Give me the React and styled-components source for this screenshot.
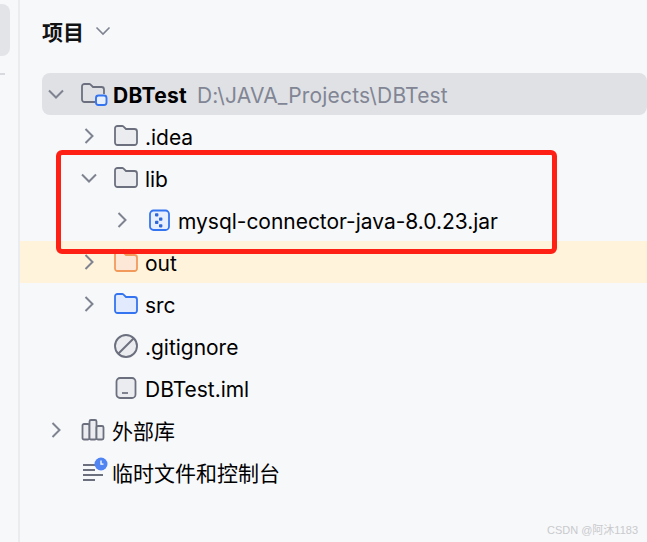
import React from "react";
import styled, { createGlobalStyle } from "styled-components";

const Global = createGlobalStyle`
  html, body { margin: 0; padding: 0; background: #f7f8fa; }
  #root { width: 647px; height: 542px; overflow: hidden; }
`;

const Page = styled.div`
  position: relative;
  display: flex;
  width: 647px;
  height: 542px;
  overflow: hidden;
  background: #f7f8fa;
  color: #000;
  font-family: Inter, "Noto Sans CJK SC", sans-serif;
`;

const Rail = styled.aside`
  flex: none;
  width: 20px;
  box-sizing: border-box;
  border-right: 2px solid #ebecf0;
  padding-top: 4px;
`;

const RailButton = styled.div`
  width: 10px;
  height: 52px;
  background: #e2e4e8;
  border-radius: 0 8px 8px 0;
`;

const RailDivider = styled.div`
  width: 5px;
  height: 1.5px;
  margin-top: 17px;
  background: #d8dae0;
`;

const Main = styled.main`
  flex: 1;
  min-width: 0;
`;

const Header = styled.header`
  display: flex;
  align-items: center;
  gap: 11px;
  height: 62px;
  padding-left: 22px;
  box-sizing: border-box;
  margin-bottom: 11px;
`;

const Title = styled.h1`
  margin: 0;
  font-size: 21px;
  font-weight: 700;
  color: #111214;
`;

const HeaderChevron = styled.span`
  flex: none;
  display: flex;
  width: 16px;
  color: #7f8390;
`;

const Tree = styled.div`
  display: flex;
  flex-direction: column;
`;

const Row = styled.div`
  display: flex;
  align-items: center;
  height: 42px;
  padding-left: ${(p) => 24 + p.$depth * 33}px;
  background: ${(p) => (p.$tint ? "#fff3dc" : "transparent")};
`;

const RootRow = styled.div`
  display: flex;
  align-items: center;
  height: 42px;
  margin-left: 22px;
  padding-left: 2px;
  background: #dfe1e5;
  border-radius: 8px 8px 8px 8px;
`;

const ChevronSlot = styled.span`
  flex: none;
  display: flex;
  align-items: center;
  justify-content: center;
  width: 24px;
  height: 24px;
  color: #7f8390;
`;

const IconSlot = styled.span`
  flex: none;
  display: flex;
  align-items: center;
  width: ${(p) => (p.$root ? 45 : 44)}px;
  padding-left: 13px;
  box-sizing: border-box;
`;

const Label = styled.span`
  font-size: 21px;
  padding-top: ${(p) => (p.$cjk ? 0 : 2)}px;
  white-space: nowrap;
  letter-spacing: ${(p) => (p.$cjk ? 0 : -0.03)}px;
`;

const RootName = styled.span`
  font-size: 21px;
  font-weight: 700;
  letter-spacing: 0.3px;
  padding-top: 2px;
  white-space: nowrap;
`;

const Path = styled.span`
  margin-left: 10px;
  font-size: 21px;
  letter-spacing: 0.17px;
  padding-top: 2px;
  color: #818594;
  white-space: nowrap;
`;

const RedBox = styled.div`
  position: absolute;
  left: 56px;
  top: 150px;
  width: 501px;
  height: 104px;
  box-sizing: border-box;
  border: 5px solid #ff2015;
  border-radius: 6px;
  pointer-events: none;
`;

const Watermark = styled.div`
  position: absolute;
  right: 9px;
  bottom: 5px;
  font-family: "Liberation Sans", "Noto Sans CJK SC", sans-serif;
  font-size: 11px;
  color: #c9cacd;
`;

const Right = () => (
  <svg width="24" height="24" viewBox="0 0 24 24" fill="none" stroke="currentColor" strokeWidth="2">
    <path d="M8.5 5 L15.5 12 L8.5 19" />
  </svg>
);
const Down = () => (
  <svg width="24" height="24" viewBox="0 0 24 24" fill="none" stroke="currentColor" strokeWidth="2">
    <path d="M5 8.5 L12 15.5 L19 8.5" />
  </svg>
);

const FOLDER = "M1 4.5 a2.5 2.5 0 0 1 2.5-2.5 h4.8 a1.5 1.5 0 0 1 1 .4 l2.7 2.6 h8.5 a2.5 2.5 0 0 1 2.5 2.5 v11 a2.5 2.5 0 0 1-2.5 2.5 h-17 a2.5 2.5 0 0 1-2.5-2.5 z";

const Folder = ({ stroke = "#6c707e", fill = "#ebecf0" }) => (
  <svg width="24" height="24" viewBox="0 0 24 24" style={{ display: "block" }}>
    <path d={FOLDER} fill={fill} stroke={stroke} strokeWidth="1.8" />
  </svg>
);

const ModuleFolder = () => (
  <svg width="28" height="26" viewBox="0 0 28 26" style={{ display: "block", overflow: "visible" }}>
    <path d="M14 21 H3.5 a2.5 2.5 0 0 1-2.5-2.5 V5.5 a2.5 2.5 0 0 1 2.5-2.5 h4.8 a1.5 1.5 0 0 1 1 .4 l2.7 2.6 h8.5 a2.5 2.5 0 0 1 2.5 2.5 v4.5" fill="none" stroke="#6c707e" strokeWidth="1.8" />
    <rect x="15" y="14.5" width="10.5" height="9.5" rx="2.5" fill="#e7effd" stroke="#3574f0" strokeWidth="1.9" />
  </svg>
);

const Jar = () => (
  <svg width="24" height="24" viewBox="0 0 24 24" style={{ display: "block" }}>
    <rect x="3" y="2.5" width="19" height="19.5" rx="3.5" fill="#e7effd" stroke="#3574f0" strokeWidth="1.8" />
    <g fill="#2d66d8">
      <rect x="8" y="5.2" width="3.4" height="3.2" rx="0.8" />
      <rect x="12" y="9.6" width="3.4" height="3.2" rx="0.8" />
      <rect x="8" y="12.8" width="3.4" height="3.2" rx="0.8" />
      <rect x="12" y="16.2" width="3.4" height="3.2" rx="0.8" />
    </g>
  </svg>
);

const Ignored = () => (
  <svg width="24" height="24" viewBox="0 0 24 24" style={{ display: "block" }}>
    <circle cx="12" cy="12" r="11" fill="#ebecf0" stroke="#6c707e" strokeWidth="1.9" />
    <path d="M4.5 19.5 L19.5 4.5" stroke="#6c707e" strokeWidth="1.9" />
  </svg>
);

const ImlFile = () => (
  <svg width="24" height="24" viewBox="0 0 24 24" style={{ display: "block" }}>
    <rect x="2.5" y="2" width="19" height="20" rx="3.5" fill="#ebecf0" stroke="#6c707e" strokeWidth="1.8" />
    <path d="M8 17 H14" stroke="#6c707e" strokeWidth="1.7" />
  </svg>
);

const Library = () => (
  <svg width="24" height="24" viewBox="0 0 24 24" style={{ display: "block" }}>
    <g fill="#ebecf0" stroke="#6c707e" strokeWidth="1.8">
      <rect x="1.5" y="6" width="7" height="15.5" rx="1.5" />
      <rect x="8.5" y="2" width="7" height="19.5" rx="1.5" />
      <rect x="15.5" y="8" width="7" height="13.5" rx="1.5" />
    </g>
  </svg>
);

const Scratches = () => (
  <svg width="25" height="24" viewBox="0 0 25 24" style={{ display: "block", overflow: "visible" }}>
    <path d="M2 5 H14 M2 10 H14 M2 15 H22 M2 20 H14" stroke="#6c707e" strokeWidth="1.8" />
    <circle cx="20" cy="4" r="6.5" fill="#4f84f2" />
    <path d="M20 0.5 V4.2 H22.5" fill="none" stroke="#fff" strokeWidth="1.3" />
  </svg>
);

const items = [
  { depth: 1, icon: <Folder />, label: ".idea" },
  { depth: 1, open: true, icon: <Folder />, label: "lib" },
  { depth: 2, icon: <Jar />, label: "mysql-connector-java-8.0.23.jar" },
  { depth: 1, tint: true, icon: <Folder stroke="#f29a5c" fill="#fde8d8" />, label: "out" },
  { depth: 1, icon: <Folder stroke="#3574f0" fill="#e1ebfd" />, label: "src" },
  { depth: 1, leaf: true, icon: <Ignored />, label: ".gitignore" },
  { depth: 1, leaf: true, icon: <ImlFile />, label: "DBTest.iml" },
  { depth: 0, cjk: true, icon: <Library />, label: "外部库" },
  { depth: 0, cjk: true, leaf: true, icon: <Scratches />, label: "临时文件和控制台" },
];

export default function App() {
  return (
    <Page>
      <Global />
      <Rail>
        <RailButton />
        <RailDivider />
      </Rail>
      <Main>
        <Header>
          <Title>项目</Title>
          <HeaderChevron>
            <svg width="16" height="16" viewBox="0 0 16 16" fill="none" stroke="currentColor" strokeWidth="1.6">
              <path d="M1.5 4.5 L8 11 L14.5 4.5" />
            </svg>
          </HeaderChevron>
        </Header>
        <Tree>
          <RootRow>
            <ChevronSlot><Down /></ChevronSlot>
            <IconSlot $root><ModuleFolder /></IconSlot>
            <RootName>DBTest</RootName>
            <Path>D:\JAVA_Projects\DBTest</Path>
          </RootRow>
          {items.map((it) => (
            <Row key={it.label} $depth={it.depth} $tint={it.tint}>
              <ChevronSlot>{it.leaf ? null : it.open ? <Down /> : <Right />}</ChevronSlot>
              <IconSlot>{it.icon}</IconSlot>
              <Label $cjk={it.cjk}>{it.label}</Label>
            </Row>
          ))}
        </Tree>
      </Main>
      <RedBox />
      <Watermark>CSDN @阿沐1183</Watermark>
    </Page>
  );
}
